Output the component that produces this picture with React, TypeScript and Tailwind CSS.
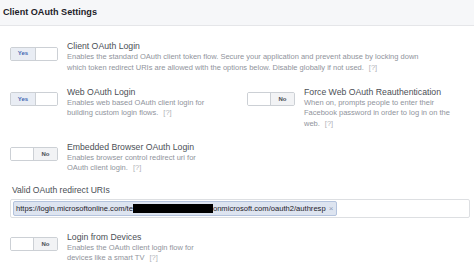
import React from 'react'

function Toggle({ on }: { on: boolean }) {
  return (
    <div className="flex h-[14px] w-[48px] shrink-0 overflow-hidden rounded-[2px] border border-[#ccd0d5] bg-white">
      {on ? (
        <>
          <div className="flex w-[24px] items-center justify-center bg-[#e9edf4] text-[6px] font-bold text-[#4267b2]">Yes</div>
          <div className="flex-1 border-l border-[#ccd0d5] bg-white" />
        </>
      ) : (
        <>
          <div className="flex-1 bg-white" />
          <div className="flex w-[24px] items-center justify-center border-l border-[#ccd0d5] bg-[#f2f3f5] text-[6px] font-bold text-[#4b4f56]">No</div>
        </>
      )}
    </div>
  )
}

function Setting({ on, title, lines }: { on: boolean; title: string; lines: string[] }) {
  return (
    <div className="flex items-start">
      <div className="mt-[5.5px]">
        <Toggle on={on} />
      </div>
      <div className="ml-[9px]">
        <div className="text-[8.7px] leading-[11px] text-[#4b4f56]">{title}</div>
        <div className="text-[7.5px] leading-[10.5px] text-[#90949c]">
          {lines.map((l, i) => (
            <div key={i} className="whitespace-nowrap">
              {l}
              {i === lines.length - 1 && <span className="ml-[5px] text-[#b0b3b8]">[?]</span>}
            </div>
          ))}
        </div>
      </div>
    </div>
  )
}

export default function App() {
  return (
    <div className="h-[266px] w-[474px] overflow-hidden bg-white font-['Liberation_Sans',Arial,sans-serif]">
      <div className="flex h-[26px] items-center border-b border-[#e5e6e9] bg-[#f6f7f9] px-[3px]">
        <h1 className="text-[9.1px] font-bold text-[#1d2129]">Client OAuth Settings</h1>
      </div>

      <div className="pl-[10px] pt-[15px]">
        <Setting
          on
          title="Client OAuth Login"
          lines={[
            'Enables the standard OAuth client token flow. Secure your application and prevent abuse by locking down',
            'which token redirect URIs are allowed with the options below. Disable globally if not used.',
          ]}
        />

        <div className="mt-[13.5px] flex">
          <div className="w-[237px]">
            <Setting on title="Web OAuth Login" lines={['Enables web based OAuth client login for', 'building custom login flows.']} />
          </div>
          <Setting
            on={false}
            title="Force Web OAuth Reauthentication"
            lines={['When on, prompts people to enter their', 'Facebook password in order to log in on the', 'web.']}
          />
        </div>

        <div className="mt-[12.5px]">
          <Setting
            on={false}
            title="Embedded Browser OAuth Login"
            lines={['Enables browser control redirect uri for', 'OAuth client login.']}
          />
        </div>

        <div className="mt-[11px] pl-[2px] text-[8.6px] leading-[11px] text-[#4b4f56]">Valid OAuth redirect URIs</div>
        <div className="mr-[4px] mt-[3.5px] flex h-[19px] items-center rounded-[2px] border border-[#dddfe2] bg-white px-[2px]">
          <div className="flex h-[15px] items-center whitespace-nowrap rounded-[2px] border border-[#b4c3dd] bg-[#dde4f0] pl-[2px] pr-[3px] text-[7.6px] text-[#1d2129]">
            <span>https://login.microsoftonline.com/te</span>
            <span className="inline-block h-[9px] w-[80px] bg-black" />
            <span>onmicrosoft.com/oauth2/authresp</span>
            <span className="ml-[3px] text-[8px] text-[#8d9bb5]">×</span>
          </div>
        </div>

        <div className="mt-[13.5px]">
          <Setting
            on={false}
            title="Login from Devices"
            lines={['Enables the OAuth client login flow for', 'devices like a smart TV']}
          />
        </div>
      </div>
    </div>
  )
}
